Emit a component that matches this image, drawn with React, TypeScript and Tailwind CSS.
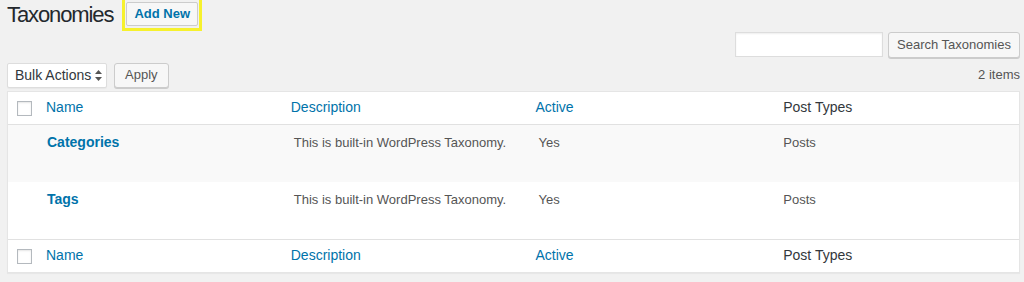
import React from "react";

// Taxonomies list screen (WP admin style)
const columns = ["Name", "Description", "Active", "Post Types"];

const rows = [
  { name: "Categories", description: "This is built-in WordPress Taxonomy.", active: "Yes", types: "Posts" },
  { name: "Tags", description: "This is built-in WordPress Taxonomy.", active: "Yes", types: "Posts" },
];

const HeaderRow = ({ top }: { top?: boolean }) => (
  <div
    className={`grid grid-cols-[32px_1fr_1fr_1fr_1fr] h-[33px] items-center text-[14px] ${
      top ? "border-b border-[#e1e1e1]" : "border-t border-[#e1e1e1]"
    }`}
  >
    <div className="flex pl-[9px]">
      <span className="w-[15px] h-[15px] border border-[#b4b9be] bg-white shadow-[inset_0_1px_2px_rgba(0,0,0,0.1)]" />
    </div>
    {columns.map((c, i) => (
      <div
        key={c}
        className={`-mt-[1px] ${i === 3 ? "pl-[9px] text-[#32373c]" : i === 0 ? "pl-[6px] text-[#0073aa]" : "pl-[6px] text-[#0073aa]"}`}
      >
        {c}
      </div>
    ))}
  </div>
);

export default function App() {
  return (
    <div
      className="w-[1024px] h-[282px] bg-[#f1f1f1] text-[#444] overflow-hidden"
      style={{ fontFamily: '"Liberation Sans", Arial, sans-serif' }}
    >
      <div className="pl-[7px] pr-[4px]">
        {/* Title */}
        <div className="flex items-center h-[31px]">
          <h1 className="text-[22px] tracking-[-1.1px] leading-none text-[#23282d] mr-[9px] -mt-[2px]">Taxonomies</h1>
          <div className="border-[3px] border-[#f6f12d] h-[34px] -mt-[3px] px-[1px] flex items-center">
            <span className="h-[24px] px-[7px] flex items-center border border-[#ccc] bg-[#f7f7f7] rounded-[2px] text-[13px] font-bold text-[#0073aa]">
              Add New
            </span>
          </div>
        </div>

        {/* Search */}
        <div className="flex justify-end gap-[5px] mt-[1px]">
          <div className="w-[148px] h-[25px] bg-white border border-[#ddd] shadow-[inset_0_1px_2px_rgba(0,0,0,0.07)]" />
          <button className="h-[26px] w-[132px] border border-[#ccc] bg-[#f7f7f7] rounded-[3px] text-[13px] text-[#555] shadow-[0_1px_0_#ccc]">
            Search Taxonomies
          </button>
        </div>

        {/* Bulk actions */}
        <div className="flex items-center mt-[4px] h-[26px]">
          <div className="h-[25px] w-[100px] bg-white border border-[#ddd] rounded-[2px] flex items-center pl-[7px] text-[14px] text-[#32373c] shadow-[0_1px_1px_rgba(0,0,0,0.04)]">
            Bulk Actions
            <svg width="7" height="11" viewBox="0 0 7 11" className="ml-[4px]">
              <path d="M3.5 0 L7 4 H0 Z M3.5 11 L7 7 H0 Z" fill="#555" />
            </svg>
          </div>
          <button className="ml-[7px] h-[25px] px-[10px] border border-[#ccc] bg-[#f7f7f7] rounded-[3px] text-[13px] text-[#555] shadow-[0_1px_0_#ccc]">
            Apply
          </button>
          <div className="ml-auto text-[13px] text-[#555]">2 items</div>
        </div>

        {/* Table */}
        <div className="mt-[3px] w-[1013px] bg-white border border-[#e5e5e5] shadow-[0_1px_1px_rgba(0,0,0,0.04)]">
          <HeaderRow top />
          {rows.map((r, i) => (
            <div
              key={r.name}
              className={`grid grid-cols-[32px_1fr_1fr_1fr_1fr] h-[57px] text-[13px] ${
                i % 2 === 0 ? "bg-[#f9f9f9]" : "bg-white"
              }`}
            >
              <div />
              <div className="pl-[7px] pt-[7px] text-[14px] font-bold text-[#0073aa]">{r.name}</div>
              <div className="pl-[9px] pt-[8px] text-[#555]">{r.description}</div>
              <div className="pl-[9px] pt-[8px] text-[#555]">{r.active}</div>
              <div className="pl-[9px] pt-[8px] text-[#555]">{r.types}</div>
            </div>
          ))}
          <HeaderRow />
        </div>
      </div>
    </div>
  );
}
